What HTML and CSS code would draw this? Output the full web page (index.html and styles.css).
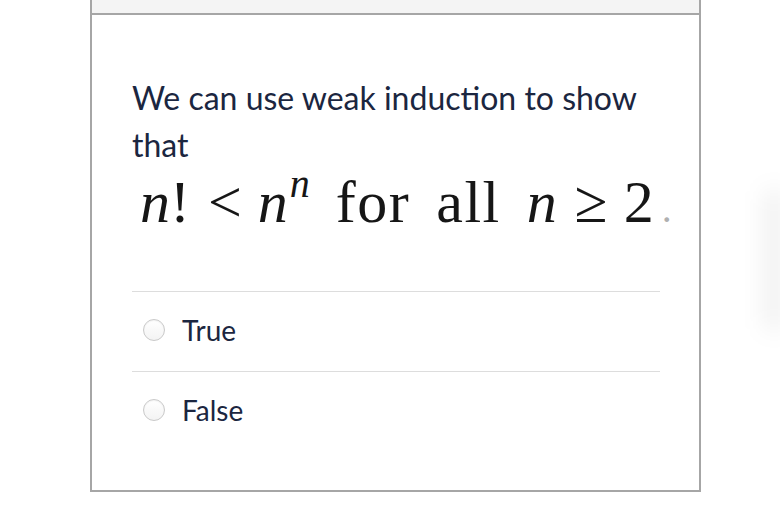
FILE: index.html
```html
<!DOCTYPE html>
<html>
<head>
<meta charset="utf-8">
<link rel="stylesheet" href="styles.css">
</head>
<body>
<div class="card">
  <div class="card-head"></div>
  <div class="card-body">
    <p class="question">We can use weak induction to show that</p>
    <div class="math"><i>n</i>!<span class="rel">&lt;</span><i>n</i><sup><i>n</i></sup><span class="word">for</span><span class="word">all</span><i>n</i><span class="rel">≥</span>2<span class="dot">.</span></div>
    <ul class="answers">
      <li class="answer"><span class="radio"></span><span class="label">True</span></li>
      <li class="answer"><span class="radio"></span><span class="label">False</span></li>
    </ul>
  </div>
</div>
<div class="shadow-blob"></div>
</body>
</html>
```

FILE: styles.css
```css
html, body {
  margin: 0;
  padding: 0;
  background: #ffffff;
  overflow: hidden;
}
body {
  width: 780px;
  height: 528px;
  position: relative;
  font-family: Lato, "Liberation Sans", sans-serif;
  color: #1b2640;
}
.card {
  margin-left: 90px;
  width: 607px;
  border: 2px solid #a6a6a6;
  border-top: none;
}
.card-head {
  height: 13px;
  background: #f4f4f4;
  border-bottom: 2px solid #a6a6a6;
}
.card-body {
  padding: 59px 39px 39px 40px;
}
.question {
  margin: 0;
  font-size: 32px;
  line-height: 47px;
  padding-right: 20px;
}
.math {
  margin-top: -2px;
  font-family: "Liberation Serif", "DejaVu Serif", serif;
  font-size: 60px;
  line-height: 72px;
  height: 72px;
  color: #161616;
  padding-left: 8px;
  white-space: nowrap;
}
.math i {
  font-style: italic;
}
.math .rel {
  display: inline-block;
  margin: 0 16px 0 18px;
}
.math .word {
  display: inline-block;
  margin-left: 26px;
  letter-spacing: 1.5px;
}
.math .word + i {
  margin-left: 26px;
}
.math .dot {
  margin-left: 8px;
  color: #b0b0b0;
  font-size: 40px;
}
.math sup {
  font-size: 40px;
  vertical-align: 25px;
  line-height: 0;
  margin-left: 2px;
}
.answers {
  list-style: none;
  margin: 53px 0 0 0;
  padding: 0;
}
.answer {
  display: flex;
  align-items: center;
  gap: 17px;
  height: 80px;
  border-top: 1px solid #dddddd;
  padding-left: 11px;
  padding-bottom: 4px;
  box-sizing: border-box;
}
.radio {
  width: 22px;
  height: 22px;
  border-radius: 50%;
  border: 1px solid #c9c9c9;
  box-sizing: border-box;
  background: linear-gradient(#ffffff, #f3f3f3);
  box-shadow: inset 0 1px 1px rgba(0,0,0,0.05);
}
.label {
  font-size: 28px;
}
.shadow-blob {
  position: absolute;
  left: 768px;
  top: 190px;
  width: 12px;
  height: 140px;
  border-radius: 6px;
  background: rgba(0,0,0,0.10);
  filter: blur(12px);
}
```
